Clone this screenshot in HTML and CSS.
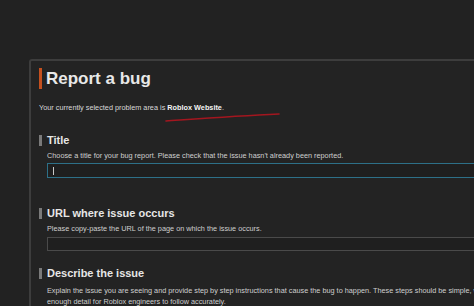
FILE: index.html
```html
<!DOCTYPE html>
<html lang="en">
<head>
  <meta charset="UTF-8">
  <title>Report a bug</title>
  <link rel="stylesheet" href="styles.css">
</head>
<body>
  <div class="page">
    <div class="panel">
      <h1 class="title">Report a bug</h1>
      <p class="area">Your currently selected problem area is <b>Roblox Website</b>.</p>
      <svg class="scribble" width="120" height="12" viewBox="0 0 120 12">
        <path d="M1 9 C 30 7, 70 4, 114 2" stroke="#a3161f" stroke-width="1.6" fill="none" stroke-linecap="round"/>
      </svg>

      <div class="field first">
        <h2 class="label">Title</h2>
        <div class="field-body">
          <p class="hint">Choose a title for your bug report. Please check that the issue hasn't already been reported.</p>
          <div class="input focus"><span class="caret"></span></div>
        </div>
      </div>

      <div class="field url">
        <h2 class="label">URL where issue occurs</h2>
        <div class="field-body">
          <p class="hint">Please copy-paste the URL of the page on which the issue occurs.</p>
          <div class="input small"></div>
        </div>
      </div>

      <div class="field describe">
        <h2 class="label">Describe the issue</h2>
        <div class="field-body">
          <p class="hint long">Explain the issue you are seeing and provide step by step instructions that cause the bug to happen. These steps should be simple, with<br>enough detail for Roblox engineers to follow accurately.</p>
        </div>
      </div>
    </div>
  </div>
</body>
</html>
```

FILE: styles.css
```css
body {
  margin: 0;
  background: #222222;
  color: #dcdcdc;
  font-family: 'Liberation Sans', Arial, sans-serif;
  overflow: hidden;
}
.page {
  padding: 59px 0 0 29px;
}
.panel {
  position: relative;
  width: 620px;
  height: 300px;
  border: 2px solid #3d3d3d;
  border-right: none;
  border-bottom: none;
  border-radius: 3px 0 0 0;
  background: #232323;
  padding: 7px 0 0 8px;
}
.title {
  margin: 0;
  font-size: 17px;
  line-height: 21px;
  font-weight: bold;
  color: #e8e8e8;
  border-left: 3px solid #c4501f;
  padding-left: 4px;
}
.area {
  margin: 14px 0 0 0;
  font-size: 7.3px;
  line-height: 10px;
  color: #d8d8d8;
}
.area b { color: #f4f4f4; }
.scribble {
  position: absolute;
  left: 134px;
  top: 51px;
}
.field.first { margin-top: 22px; }
.field.url { margin-top: 30px; }
.field.describe { margin-top: 17px; }
.label {
  margin: 0;
  font-size: 11px;
  line-height: 11px;
  font-weight: bold;
  color: #e6e6e6;
  border-left: 3px solid #7a7a7a;
  padding-left: 5px;
}
.field-body {
  margin-left: 8px;
}
.hint {
  margin: 5px 0 0 0;
  font-size: 7.3px;
  line-height: 10px;
  color: #cfcfcf;
}
.hint.long {
  margin-top: 6px;
  line-height: 11px;
}
.input {
  margin-top: 2px;
  height: 13px;
  border: 1px solid #4a4a4a;
  background: #1f1f1f;
  position: relative;
}
.input.focus {
  border: 1px solid #2d7088;
}
.input.small {
  margin-top: 3px;
  height: 12px;
}
.caret {
  position: absolute;
  left: 5px;
  top: 3px;
  width: 1px;
  height: 8px;
  background: #c8c8c8;
}
```
